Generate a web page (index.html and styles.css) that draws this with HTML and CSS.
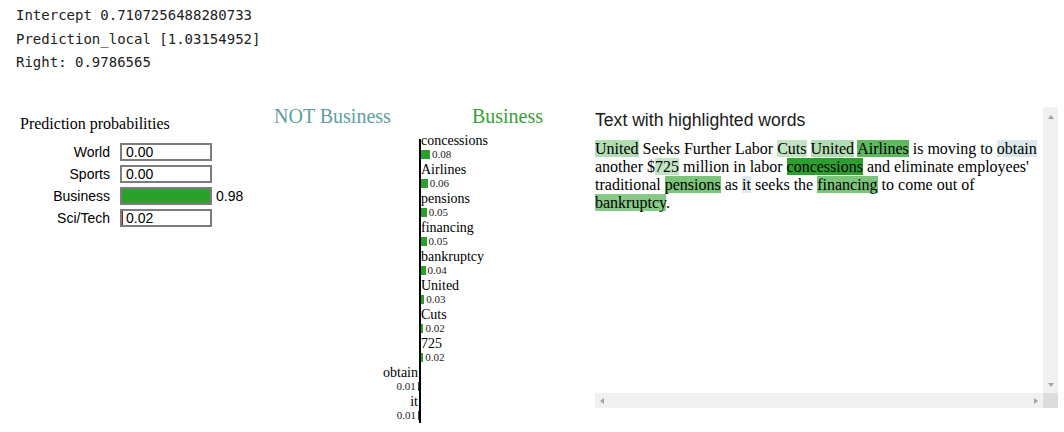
FILE: index.html
```html
<!DOCTYPE html>
<html>
<head>
<meta charset="utf-8">
<link rel="stylesheet" href="styles.css">
</head>
<body>
<div class="output">
  <div class="line">Intercept 0.7107256488280733</div>
  <div class="line">Prediction_local [1.03154952]</div>
  <div class="line">Right: 0.9786565</div>
</div>
<div class="lime">
  <div class="proba">
    <div class="proba-title">Prediction probabilities</div>
    <div class="proba-rows">
      <div class="prow"><span class="plabel">World</span><span class="pbox c-world" style="--p:0%">0.00</span></div>
      <div class="prow"><span class="plabel">Sports</span><span class="pbox c-sports" style="--p:0%">0.00</span></div>
      <div class="prow"><span class="plabel">Business</span><span class="pbox c-business" style="--p:100%"></span><span class="pval">0.98</span></div>
      <div class="prow"><span class="plabel">Sci/Tech</span><span class="pbox c-sci" style="--p:1.6%">0.02</span></div>
    </div>
  </div>
  <div class="expl">
    <div class="expl-head"><span class="neg-title">NOT Business</span><span class="pos-title">Business</span></div>
    <div class="chart">
      <div class="axis"></div>
      <div class="feat pos"><div class="flabel">concessions</div><div class="fbar"><span class="bar" style="--w:9px"></span><span class="fval">0.08</span></div></div>
      <div class="feat pos"><div class="flabel">Airlines</div><div class="fbar"><span class="bar" style="--w:6.8px"></span><span class="fval">0.06</span></div></div>
      <div class="feat pos"><div class="flabel">pensions</div><div class="fbar"><span class="bar" style="--w:5.7px"></span><span class="fval">0.05</span></div></div>
      <div class="feat pos"><div class="flabel">financing</div><div class="fbar"><span class="bar" style="--w:5.6px"></span><span class="fval">0.05</span></div></div>
      <div class="feat pos"><div class="flabel">bankruptcy</div><div class="fbar"><span class="bar" style="--w:4.6px"></span><span class="fval">0.04</span></div></div>
      <div class="feat pos"><div class="flabel">United</div><div class="fbar"><span class="bar" style="--w:3.2px"></span><span class="fval">0.03</span></div></div>
      <div class="feat pos"><div class="flabel">Cuts</div><div class="fbar"><span class="bar" style="--w:2.4px"></span><span class="fval">0.02</span></div></div>
      <div class="feat pos"><div class="flabel">725</div><div class="fbar"><span class="bar" style="--w:2.2px"></span><span class="fval">0.02</span></div></div>
      <div class="feat neg"><div class="flabel">obtain</div><div class="fbar"><span class="fval">0.01</span><span class="bar" style="--w:1.2px"></span></div></div>
      <div class="feat neg"><div class="flabel">it</div><div class="fbar"><span class="fval">0.01</span><span class="bar" style="--w:1.1px"></span></div></div>
    </div>
  </div>
  <div class="panel">
    <div class="panel-content">
      <h3 class="ptitle">Text with highlighted words</h3>
      <p class="ptext"><span class="hl w37">United</span> Seeks Further Labor <span class="hl w27">Cuts</span> <span class="hl w37">United</span> <span class="hl w75">Airlines</span> is moving to <span class="hl wneg">obtain</span> another $<span class="hl w27">725</span> million in labor <span class="hl w100">concessions</span> and eliminate employees' traditional <span class="hl w62">pensions</span> as <span class="hl wneg">it</span> seeks the <span class="hl w62">financing</span> to come out of <span class="hl w55">bankruptcy</span>.</p>
    </div>
    <div class="vbar"><span class="arr up"></span><span class="arr down"></span></div>
    <div class="hbar"><span class="arr left"></span><span class="arr right"></span></div>
    <div class="corner"></div>
  </div>
</div>
</body>
</html>
```
FILE: styles.css
```css
* { box-sizing: border-box; }
html, body { margin: 0; padding: 0; background: #fff; }
body { width: 1064px; height: 432px; overflow: hidden; color: #000; }

.output {
  padding: 4px 16px 0;
  font-family: "DejaVu Sans Mono", "Liberation Mono", monospace;
  font-size: 14px;
  line-height: 23.5px;
  color: #212121;
}
.line { white-space: pre; }

.lime {
  display: flex;
  align-items: flex-start;
  margin-top: 29.5px;
  padding-left: 16px;
}

/* prediction probabilities */
.proba { width: 249px; padding-top: 9.6px; flex: none; }
.proba-title {
  padding-left: 4px;
  font-family: "Liberation Serif", serif;
  font-size: 16px;
  line-height: 20px;
}
.proba-rows {
  margin-top: 9.4px;
  display: flex;
  flex-direction: column;
  gap: 4px;
  font-family: "Liberation Sans", Arial, sans-serif;
  font-size: 14px;
}
.prow { display: flex; align-items: center; height: 18px; line-height: 18px; }
.plabel { width: 94px; text-align: right; margin-right: 10px; }
.pbox {
  width: 92px;
  height: 18px;
  border: 2px solid #7d7d7d;
  padding-left: 4px;
  line-height: 14px;
  background: linear-gradient(to right, var(--c) var(--p), #fff var(--p));
}
.pval { margin-left: 4px; }
.c-world { --c: #1f77b4; }
.c-sports { --c: #ff7f0e; }
.c-business { --c: #2ca02c; }
.c-sci { --c: #8e1b1b; }

/* explanation chart */
.expl { width: 325px; flex: none; font-family: "Liberation Serif", serif; }
.expl-head {
  display: flex;
  gap: 81px;
  padding-left: 9px;
  font-size: 20px;
  line-height: 24px;
}
.neg-title { color: #5f9ea0; }
.pos-title { color: #38a038; }
.chart {
  display: grid;
  grid-template-columns: 154px 2px 1fr;
  grid-template-rows: repeat(10, 29px);
  margin-top: 5px;
}
.axis { grid-column: 2; grid-row: 1 / -1; background: #000; margin-top: 6px; }
.feat.pos { grid-column: 3; }
.feat.neg { grid-column: 1; text-align: right; }
.flabel { font-size: 14px; line-height: 15px; white-space: nowrap; }
.neg .flabel { padding-right: 1px; }
.fbar { display: flex; align-items: flex-start; gap: 2px; height: 14px; }
.neg .fbar { justify-content: flex-end; }
.bar { flex: none; width: var(--w); height: 9px; margin-top: 1.5px; background: #2ca02c; }
.neg .bar { background: #2f4f4f; }
.fval { font-size: 11px; line-height: 13px; color: #222; }

/* text panel */
.panel {
  flex: none;
  margin-left: 5px;
  margin-top: 3px;
  width: 463px;
  height: 301px;
  display: grid;
  grid-template-columns: 1fr 15px;
  grid-template-rows: 1fr 15px;
}
.panel-content { padding-top: 3px; overflow: hidden; }
.ptitle {
  margin: 0;
  font-family: "Liberation Sans", Arial, sans-serif;
  font-weight: normal;
  font-size: 17.6px;
  line-height: 20px;
  color: #1a1a1a;
}
.ptext {
  margin: 10px 0 0;
  font-family: "Liberation Serif", serif;
  font-size: 16px;
  line-height: 18px;
}
.w100 { background: rgb(44, 160, 44); }
.w75 { background: rgb(94, 184, 94); }
.w62 { background: rgb(124, 196, 124); }
.w55 { background: rgb(136, 201, 136); }
.w37 { background: rgb(178, 220, 178); }
.w27 { background: rgb(194, 228, 194); }
.wneg { background: #dde8ed; }

.vbar {
  background: #f1f1f1;
  display: flex;
  flex-direction: column;
  justify-content: space-between;
  align-items: center;
  padding: 8px 0 6px;
}
.hbar {
  background: #f1f1f1;
  display: flex;
  justify-content: space-between;
  align-items: center;
  padding: 0 5px;
}
.corner { background: #dcdcdc; }
.arr { width: 0; height: 0; border-style: solid; border-color: transparent; }
.up { border-width: 0 3.5px 4px; border-bottom-color: #a3a3a3; }
.down { border-width: 4px 3.5px 0; border-top-color: #a3a3a3; }
.left { border-width: 3.5px 4px 3.5px 0; border-right-color: #a3a3a3; }
.right { border-width: 3.5px 0 3.5px 4px; border-left-color: #a3a3a3; }
```
